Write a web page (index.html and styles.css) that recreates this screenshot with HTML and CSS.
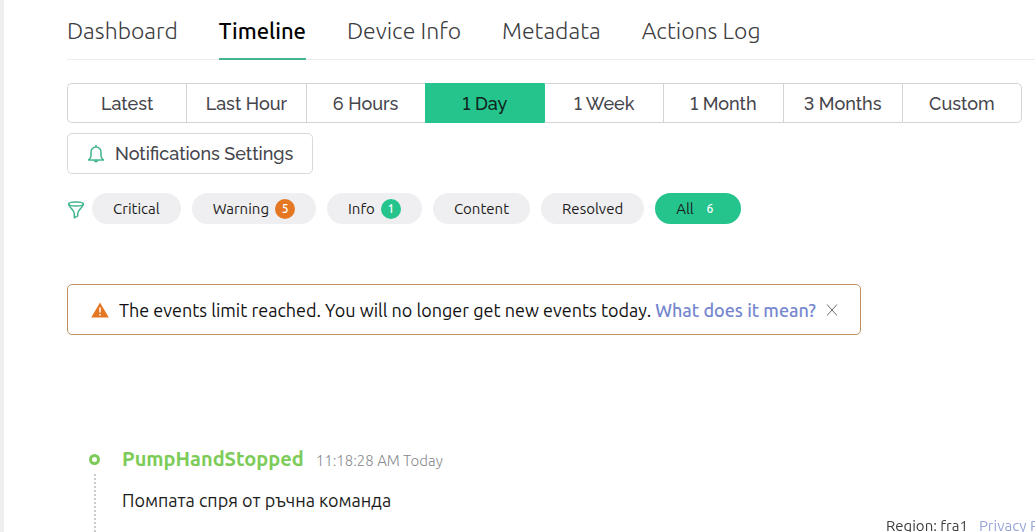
FILE: index.html
```html
<!DOCTYPE html>
<html lang="en">
<head>
<meta charset="utf-8">
<meta name="viewport" content="width=device-width, initial-scale=1">
<title>Device timeline</title>
<link rel="stylesheet" href="styles.css">
</head>
<body>
<main class="page">
  <nav class="tabs" aria-label="Device sections">
    <a class="tab" href="#dashboard">Dashboard</a>
    <a class="tab tab-active" href="#timeline" aria-current="page">Timeline</a>
    <a class="tab" href="#info">Device Info</a>
    <a class="tab" href="#metadata">Metadata</a>
    <a class="tab" href="#actions">Actions Log</a>
  </nav>

  <div class="toolbar">
    <div class="periods" role="group" aria-label="Period">
      <button type="button" class="period">Latest</button>
      <button type="button" class="period">Last Hour</button>
      <button type="button" class="period">6 Hours</button>
      <button type="button" class="period period-active" aria-pressed="true">1 Day</button>
      <button type="button" class="period">1 Week</button>
      <button type="button" class="period">1 Month</button>
      <button type="button" class="period">3 Months</button>
      <button type="button" class="period">Custom</button>
    </div>
    <button type="button" class="notify">
      <svg class="bell" viewBox="0 0 18 20" aria-hidden="true">
        <path d="M9 1.500v1.500M4 12V8a5 5 0 0 1 10 0v4c0 1.500.8 2.500 2.500 4h-15C3.200 14.500 4 13.500 4 12M7.500 16.500c.2 1.700 2.800 1.700 3 0"/>
      </svg>
      <span>Notifications Settings</span>
    </button>
  </div>

  <div class="filters" role="group" aria-label="Event filters">
    <svg class="funnel" viewBox="0 0 18 20" aria-hidden="true">
      <ellipse cx="9" cy="5" rx="7.400" ry="2"/>
      <path d="M1.600 5.200c.2 1.800 2 3.300 3.400 5 1.300 1.600 2.300 2.800 2.300 4.400v4.200l3.400-2v-2.200c0-1.600 1-2.800 2.300-4.400 1.400-1.700 3.200-3.200 3.400-5"/>
    </svg>
    <button type="button" class="chip">Critical</button>
    <button type="button" class="chip">Warning <span class="count count-warning">5</span></button>
    <button type="button" class="chip">Info <span class="count count-info">1</span></button>
    <button type="button" class="chip">Content</button>
    <button type="button" class="chip">Resolved</button>
    <button type="button" class="chip chip-active" aria-pressed="true">All <span class="count count-info">6</span></button>
  </div>

  <div class="alert" role="alert">
    <svg class="warn" viewBox="0 0 18 16" aria-hidden="true">
      <path class="warn-shape" d="M9 .5 17.800 15.500H.2z"/>
      <path class="warn-mark" d="M9 5.500v5M9 12v1.600"/>
    </svg>
    <p class="alert-text">The events limit reached. You will no longer get new events today. <a class="alert-link" href="#limits">What does it mean?</a></p>
    <button type="button" class="close" aria-label="Close">
      <svg class="cross" viewBox="0 0 12 12" aria-hidden="true"><path d="M1 .5l10 11M11 .5l-10 11"/></svg>
    </button>
  </div>

  <ol class="events">
    <li class="event">
      <div class="rail"><span class="dot"></span><span class="line"></span></div>
      <div class="event-body">
        <div class="event-head">
          <h2 class="event-name">PumpHandStopped</h2>
          <time class="event-time">11:18:28 AM Today</time>
        </div>
        <p class="event-text" lang="bg">Помпата спря от ръчна команда</p>
      </div>
    </li>
  </ol>
</main>
<footer class="footer">
  <span>Region: fra1</span>
  <a class="footer-link" href="#privacy">Privacy Policy</a>
</footer>
</body>
</html>
```
FILE: styles.css
```css
* { box-sizing: border-box; }

body {
  margin: 0;
  min-height: 100vh;
  overflow: hidden;
  border-left: 4px solid #efeff0;
  background: #fff;
  color: #1c1c20;
  font-family: Ubuntu, "Noto Sans", sans-serif;
  font-size: 16px;
}

button { font: inherit; color: inherit; cursor: pointer; }
a { text-decoration: none; }
svg { flex: none; fill: none; }

.page { padding-left: 63px; }

.tabs {
  display: flex;
  gap: 41px;
  height: 60px;
  border-bottom: 1px solid #ececee;
}
.tab {
  height: 60px;
  padding-top: 16px;
  border-bottom: 2px solid transparent;
  color: #3c3c40;
  font-size: 23px;
  font-weight: 300;
  line-height: 30px;
  white-space: nowrap;
}
.tab-active {
  border-color: #45b58e;
  color: #000;
  font-size: 22px;
  font-weight: 500;
}

.toolbar {
  display: flex;
  flex-direction: column;
  align-items: flex-start;
  gap: 10px;
  padding: 23px 13px 0 0;
  color: #45454c;
  font-family: Raleway, Lato, sans-serif;
  font-size: 18px;
  font-weight: 500;
  font-variant-numeric: lining-nums;
}
.periods { display: flex; width: 100%; }
.period {
  flex: 1 1 0;
  height: 40px;
  padding: 0;
  border: 1px solid #d4d4d6;
  border-right-width: 0;
  background: #fff;
  font-variant-numeric: inherit;
  white-space: nowrap;
}
.period:first-child { border-radius: 5px 0 0 5px; }
.period:last-child { border-right-width: 1px; border-radius: 0 5px 5px 0; }
.period-active { border-color: #25c48d; background: #25c48d; color: #10231c; }
.period-active + .period { border-left-color: #25c48d; }

.notify {
  display: flex;
  align-items: center;
  gap: 10px;
  height: 41px;
  padding: 0 19px;
  border: 1px solid #d9d9db;
  border-radius: 5px;
  background: #fff;
}
.bell, .funnel {
  width: 18px;
  height: 20px;
  stroke: #41b58b;
  stroke-width: 1.5;
  stroke-linejoin: round;
  stroke-linecap: round;
}

.filters {
  display: flex;
  align-items: center;
  gap: 11px;
  margin-top: 19px;
  font-size: 15px;
}
.funnel { margin-right: -4px; }
.chip {
  display: flex;
  align-items: center;
  gap: 6px;
  height: 31px;
  padding: 0 21px;
  border: 0;
  border-radius: 16px;
  background: #efeff1;
  white-space: nowrap;
}
.chip-active { background: #25c48d; }
.count {
  width: 20px;
  border-radius: 10px;
  color: #fff;
  font-size: 12px;
  font-weight: 500;
  line-height: 20px;
  text-align: center;
}
.count-warning { background: #e57722; }
.count-info { background: #25c48d; }

.alert {
  display: flex;
  align-items: center;
  width: fit-content;
  min-height: 51px;
  margin-top: 60px;
  padding: 0 22px 0 23px;
  border: 1px solid #bd9160;
  border-radius: 5px;
}
.warn { width: 18px; height: 16px; }
.warn-shape { fill: #e57722; }
.warn-mark { stroke: #fff; stroke-width: 1.5; }
.alert-text { margin: 0 10px 0 10px; color: #111; font-size: 18px; line-height: 24px; }
.alert-link { color: #7587cf; font-weight: 500; }
.close { display: flex; padding: 0; border: 0; background: none; }
.cross { width: 12px; height: 12px; stroke: #6c6c70; stroke-width: 1; }

.events { margin: 111px 0 0; padding: 0; list-style: none; }
.event { display: flex; gap: 22px; padding-left: 22px; }
.rail {
  display: flex;
  flex-direction: column;
  align-items: center;
  gap: 9px;
  padding-top: 8px;
}
.dot {
  width: 11px;
  height: 11px;
  border: 3px solid #7dcb58;
  border-radius: 50%;
}
.line { flex: 1; border-left: 2px dotted #cbcbce; }
.event-body { min-height: 86px; }
.event-head { display: flex; align-items: baseline; gap: 12px; }
.event-name { margin: 0; color: #7dcb58; font-size: 20px; font-weight: 600; line-height: 26px; }
.event-time { color: #88888d; font-size: 15px; font-weight: 300; }
.event-text { margin: 16px 0 0; font-size: 18px; line-height: 24px; }

.footer {
  position: fixed;
  top: calc(100vh - 16px);
  left: calc(100vw - 149px);
  display: flex;
  gap: 11px;
  color: #3c3c40;
  font-size: 15px;
  line-height: 20px;
  white-space: nowrap;
}
.footer-link { color: #98a5da; }
```
